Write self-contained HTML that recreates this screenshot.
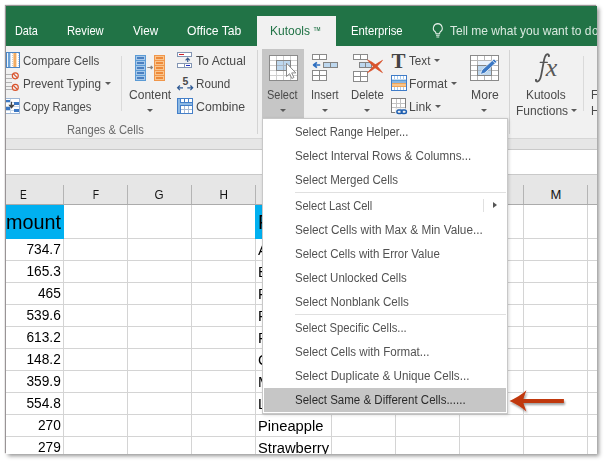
<!DOCTYPE html>
<html>
<head>
<meta charset="utf-8">
<title>Kutools Select menu</title>
<style>
html,body{margin:0;padding:0;background:#fff;}
body{width:605px;height:463px;overflow:hidden;position:relative;font-family:"Liberation Sans",sans-serif;}
#win{position:absolute;left:6px;top:6px;width:591px;height:448px;background:#fff;overflow:hidden;}
#shadow{position:absolute;left:6px;top:6px;width:591px;height:448px;box-shadow:2px 2px 4px 0 rgba(0,0,0,.42), -1px -1px 1px 0 rgba(30,20,25,.42);}
.abs{position:absolute;}
.t{position:absolute;white-space:nowrap;line-height:1;color:#444;transform-origin:0 50%;}
/* coordinates inside #win are page coords minus 6 -> use wrapper shifted */
#c{position:absolute;left:-6px;top:-6px;width:605px;height:463px;}
.tab{color:#fff;font-size:13.5px;}
.rib{font-size:13.5px;color:#444;}
.mi{font-size:12.5px;color:#444;left:295px;}
.vsep{position:absolute;width:1px;background:#dadada;}
.dd{position:absolute;width:0;height:0;border-left:3px solid transparent;border-right:3px solid transparent;border-top:3.2px solid #5a5a5a;}
.num{position:absolute;white-space:nowrap;line-height:1;color:#000;font-size:14px;text-align:right;right:544px;}
.fr{position:absolute;white-space:nowrap;line-height:1;color:#000;font-size:15px;left:259px;}
.hl{position:absolute;left:0;width:605px;height:1px;background:#d4d4d4;}
.vl{position:absolute;top:205px;height:260px;width:1px;background:#d4d4d4;}
.ch{position:absolute;top:188px;font-size:13px;color:#222;line-height:1;width:40px;text-align:center;}
.chs{position:absolute;top:185px;height:19px;width:1px;background:#b4b4b4;}
</style>
</head>
<body>
<div id="shadow"></div>
<div id="win"><div id="c">

<!-- ===== green tab bar ===== -->
<div class="abs" style="left:0;top:0;width:605px;height:46px;background:#217346;"></div>
<div class="abs" style="left:257px;top:16px;width:79px;height:31px;background:#f1f1f1;"></div>

<!-- ===== ribbon body ===== -->
<div class="abs" style="left:0;top:46px;width:605px;height:92px;background:#f1f1f1;"></div>
<div class="abs" style="left:0;top:138px;width:605px;height:1px;background:#d6d6d6;"></div>
<div class="abs" style="left:0;top:139px;width:605px;height:10px;background:#e6e6e6;"></div>
<div class="abs" style="left:0;top:149px;width:605px;height:1px;background:#c9c9c9;"></div>
<div class="abs" style="left:0;top:150px;width:605px;height:24px;background:#fff;"></div>
<div class="abs" style="left:0;top:174px;width:605px;height:1px;background:#c9c9c9;"></div>
<div class="abs" style="left:0;top:175px;width:605px;height:29px;background:#e6e6e6;"></div>
<div class="abs" style="left:0;top:204px;width:605px;height:1px;background:#ababab;"></div>

<!-- select button highlight -->
<div class="abs" style="left:262px;top:49px;width:42px;height:70px;background:#c6c6c6;"></div>

<!-- separators -->
<div class="vsep" style="left:121px;top:56px;height:55px;"></div>
<div class="vsep" style="left:257px;top:50px;height:84px;background:#d4d4d4;"></div>
<div class="vsep" style="left:509px;top:50px;height:84px;background:#d4d4d4;"></div>
<div class="vsep" style="left:583px;top:56px;height:55px;"></div>

<!-- ribbon texts -->
<span class="t" style="left:14.70px;top:23.80px;font-size:13px;color:#fff;transform:scaleX(0.8339);">Data</span>
<span class="t" style="left:67.30px;top:23.80px;font-size:13px;color:#fff;transform:scaleX(0.8610);">Review</span>
<span class="t" style="left:132.90px;top:23.80px;font-size:13px;color:#fff;transform:scaleX(0.8982);">View</span>
<span class="t" style="left:187.10px;top:23.80px;font-size:13px;color:#fff;transform:scaleX(0.9370);">Office Tab</span>
<span class="t" style="left:351.40px;top:23.80px;font-size:13px;color:#fff;transform:scaleX(0.8709);">Enterprise</span>
<span class="t" style="left:269.80px;top:23.80px;font-size:13px;color:#217346;transform:scaleX(0.9225);">Kutools</span>
<span class="t" style="left:313.20px;top:25.41px;font-size:10.5px;color:#217346;transform:scaleX(0.7810);">™</span>
<span class="t" style="left:450.20px;top:23.80px;font-size:13px;color:#d9e9df;transform:scaleX(0.9237);">Tell me what you want to d</span>
<span class="t" style="left:592.30px;top:23.80px;font-size:13px;color:#d9e9df;transform:scaleX(0.8900);">o</span>
<span class="t" style="left:23.40px;top:54.30px;font-size:13px;color:#4a4a4a;transform:scaleX(0.8886);">Compare Cells</span>
<span class="t" style="left:23.40px;top:77.30px;font-size:13px;color:#4a4a4a;transform:scaleX(0.9019);">Prevent Typing</span>
<span class="t" style="left:23.40px;top:100.30px;font-size:13px;color:#4a4a4a;transform:scaleX(0.8684);">Copy Ranges</span>
<span class="t" style="left:128.60px;top:87.70px;font-size:13px;color:#4a4a4a;transform:scaleX(0.9268);">Content</span>
<span class="t" style="left:196.00px;top:54.30px;font-size:13px;color:#4a4a4a;transform:scaleX(0.9421);">To Actual</span>
<span class="t" style="left:196.00px;top:77.30px;font-size:13px;color:#4a4a4a;transform:scaleX(0.8953);">Round</span>
<span class="t" style="left:196.00px;top:100.30px;font-size:13px;color:#4a4a4a;transform:scaleX(0.9457);">Combine</span>
<span class="t" style="left:267.40px;top:87.70px;font-size:13px;color:#4a4a4a;transform:scaleX(0.8441);">Select</span>
<span class="t" style="left:310.80px;top:87.70px;font-size:13px;color:#4a4a4a;transform:scaleX(0.8520);">Insert</span>
<span class="t" style="left:350.50px;top:87.70px;font-size:13px;color:#4a4a4a;transform:scaleX(0.8702);">Delete</span>
<span class="t" style="left:409.40px;top:54.30px;font-size:13px;color:#4a4a4a;transform:scaleX(0.8976);">Text</span>
<span class="t" style="left:409.40px;top:77.30px;font-size:13px;color:#4a4a4a;transform:scaleX(0.9302);">Format</span>
<span class="t" style="left:409.40px;top:100.30px;font-size:13px;color:#4a4a4a;transform:scaleX(0.9309);">Link</span>
<span class="t" style="left:470.50px;top:87.70px;font-size:13px;color:#4a4a4a;transform:scaleX(0.9386);">More</span>
<span class="t" style="left:526.30px;top:87.70px;font-size:13px;color:#4a4a4a;transform:scaleX(0.9155);">Kutools</span>
<span class="t" style="left:515.70px;top:103.50px;font-size:13px;color:#4a4a4a;transform:scaleX(0.9244);">Functions</span>
<span class="t" style="left:591.00px;top:87.70px;font-size:13px;color:#4a4a4a;transform:scaleX(0.8900);">F</span>
<span class="t" style="left:591.00px;top:103.50px;font-size:13px;color:#4a4a4a;transform:scaleX(0.8900);">H</span>
<span class="t" style="left:67.40px;top:124.14px;font-size:12px;color:#6a6a6a;transform:scaleX(0.9286);">Ranges &amp; Cells</span>

<!-- dropdown arrows -->
<div class="dd" style="left:104.6px;top:82.3px;"></div>
<div class="dd" style="left:146.800px;top:109px;"></div>
<div class="dd" style="left:279.600px;top:109px;"></div>
<div class="dd" style="left:321.500px;top:109px;"></div>
<div class="dd" style="left:363.700px;top:109px;"></div>
<div class="dd" style="left:434px;top:59.3px;"></div>
<div class="dd" style="left:451px;top:82.3px;"></div>
<div class="dd" style="left:435px;top:105.3px;"></div>
<div class="dd" style="left:480.800px;top:109px;"></div>
<div class="dd" style="left:570.8px;top:109.4px;"></div>

<svg class="abs" style="left:0;top:0;" width="605" height="140" viewBox="0 0 605 140">
<!-- lightbulb -->
<g fill="none" stroke="#e4efe8" stroke-width="1.1">
<path d="M437.8 23.6a4.5 4.5 0 0 0-2.5 8.2c.5.6.7 1.2.7 2h3.6c0-.8.2-1.400.7-2a4.5 4.500 0 0 0-2.500-8.200z"/>
<path d="M436 35.300h3.600M436.400 37h2.800"/>
</g>
<!-- Compare Cells -->
<g shape-rendering="crispEdges">
<rect x="6.500" y="52.500" width="13" height="15" fill="#fff" stroke="#4a86c6"/>
<path d="M12.500 53v14M18.500 53v14" stroke="#d0d0d0" stroke-dasharray="1 1" fill="none"/>
</g>
<rect x="7.900" y="53" width="2.500" height="14" fill="#6ea3d8"/>
<rect x="13.400" y="53" width="3" height="14" fill="#f2ac62"/>
<!-- Prevent Typing -->
<g shape-rendering="crispEdges" stroke="#b2b2b2" fill="none">
<path d="M0 74.500h12M0 78.500h12M0 82.500h12M0 86.500h12M0 89.500h12"/>
</g>
<g fill="#f1f1f1" stroke="#d9532c" stroke-width="1.150">
<circle cx="15.300" cy="75.800" r="3"/><path d="M13.200 73.700l4.200 4.200"/>
<circle cx="15.300" cy="87.400" r="3"/><path d="M13.200 85.300l4.200 4.200"/>
</g>
<!-- Copy Ranges -->
<g shape-rendering="crispEdges">
<rect x="2.500" y="98.500" width="17" height="15" fill="#fff" stroke="#9bb4d4"/>
<path d="M3 102.500h16M3 106.500h16M3 110.500h16M10.500 99v14" stroke="#c9d9ea" fill="none"/>
<rect x="5" y="100" width="5" height="2" fill="#3b78c4"/>
<rect x="14" y="102" width="5" height="3" fill="#3b78c4"/>
<rect x="5" y="107" width="5" height="3" fill="#3b78c4"/>
<rect x="14" y="109" width="5" height="3" fill="#3b78c4"/>
</g>
<path d="M11.500 101.800v4M9.400 105.200l2.100 2.600 2.100-2.600z" stroke="#444" stroke-width="1.100" fill="#444"/>
<!-- Content -->
<g shape-rendering="crispEdges">
<rect x="135" y="55" width="11" height="26" fill="#5b9bd5"/>
<g fill="#4a7fc0" stroke="#a6c8ea">
<rect x="136.500" y="56.500" width="8" height="3"/><rect x="136.500" y="61.500" width="8" height="3"/><rect x="136.500" y="66.500" width="8" height="3"/><rect x="136.500" y="71.500" width="8" height="3"/><rect x="136.500" y="76.500" width="8" height="3"/>
</g>
<rect x="154" y="55" width="11" height="26" fill="#f0964a"/>
<g fill="#ee8a3a" stroke="#f9c58d">
<rect x="155.500" y="56.500" width="8" height="3"/><rect x="155.500" y="61.500" width="8" height="3"/><rect x="155.500" y="66.500" width="8" height="3"/><rect x="155.500" y="71.500" width="8" height="3"/><rect x="155.500" y="76.500" width="8" height="3"/>
</g>
</g>
<path d="M147.300 67.500h4.500M151 65.900l1.900 1.600-1.900 1.600z" stroke="#808080" fill="#808080" stroke-width="0.900"/>
<!-- To Actual -->
<g shape-rendering="crispEdges">
<rect x="177.500" y="52.500" width="14" height="4" fill="#fff" stroke="#8395b3"/>
<rect x="179" y="54" width="5" height="1" fill="#d0202a"/>
<rect x="177.500" y="63.500" width="14" height="4" fill="#fff" stroke="#8395b3"/>
<path d="M184.500 64v4" stroke="#8395b3"/>
<rect x="186" y="65" width="4" height="1" fill="#2030c0"/>
</g>
<path d="M187.700 62.100v-3.500M185.600 60.400l2.100-2.300 2.100 2.300" stroke="#3a5a8c" fill="none" stroke-width="1.200"/>
<!-- Round -->
<g stroke="#2f5a94" fill="none" stroke-width="1.200">
<path d="M183 87.800h-5.200M179.900 85.500l-2.300 2.300 2.300 2.300"/>
<path d="M187.300 87.800h5.200M190.400 85.500l2.300 2.300-2.300 2.300"/>
</g>
<!-- Combine -->
<g shape-rendering="crispEdges">
<rect x="177" y="98" width="16" height="16" fill="#447fc8"/>
<rect x="178" y="99" width="2" height="14" fill="#8db9e4"/>
<rect x="178" y="103" width="14" height="2" fill="#8db9e4"/>
<rect x="181" y="106" width="11" height="7" fill="#a9bcd6"/>
<g fill="#fff">
<rect x="181" y="99" width="3" height="3"/><rect x="185" y="99" width="3" height="3"/><rect x="189" y="99" width="3" height="3"/>
<rect x="181" y="106" width="3" height="3"/><rect x="185" y="106" width="3" height="3"/><rect x="189" y="106" width="3" height="3"/>
<rect x="181" y="110" width="3" height="3"/><rect x="185" y="110" width="3" height="3"/><rect x="189" y="110" width="3" height="3"/>
</g>
</g>
</svg>

<span class="abs" style="left:182.4px;top:76.1px;font-family:'Liberation Sans',sans-serif;font-weight:bold;font-size:10.5px;line-height:1;color:#4a4a4a;">5</span>
<svg class="abs" style="left:0;top:0;" width="605" height="140" viewBox="0 0 605 140">
<!-- Select -->
<g shape-rendering="crispEdges">
<rect x="269.500" y="55.500" width="28" height="25" fill="#fff" stroke="#8a8a8a"/>
<path d="M276.500 56v24M283.500 56v24M290.500 56v24M270 60.500h27M270 65.500h27M270 70.500h27M270 75.500h27" stroke="#cfcfcf" fill="none"/>
<rect x="276.500" y="60.500" width="14" height="10" fill="#bdd7ee" stroke="#858585"/>
<path d="M283.500 61v9M277 65.500h13" stroke="#aab4c0" fill="none"/>
</g>
<path d="M286.500 63.200v13.300l3.100-2.800 2.200 4.800 2.100-1-2.200-4.600h4.100z" fill="#fff" stroke="#8a8a8a" stroke-width="1" stroke-linejoin="round"/>
<!-- Insert -->
<g shape-rendering="crispEdges" fill="#fff" stroke="#8a8a8a">
<rect x="312.500" y="54.500" width="14" height="5"/><path d="M319.500 55v5"/>
<rect x="312.500" y="70.500" width="14" height="10"/><path d="M319.500 71v10M313 75.500h14"/>
</g>
<g shape-rendering="crispEdges" fill="#bdd7ee" stroke="#838383">
<rect x="323.500" y="62.500" width="14" height="5"/><path d="M330.500 63v5"/>
</g>
<path d="M314.600 65h5.600M316.900 62.300l-3.300 2.700 3.300 2.700" stroke="#2e6fc0" fill="none" stroke-width="1.700" stroke-linejoin="round"/>
<!-- Delete -->
<g shape-rendering="crispEdges" fill="#fff" stroke="#8a8a8a">
<rect x="353.500" y="54.500" width="14" height="5"/><path d="M360.500 55v5"/>
<rect x="353.500" y="71.500" width="14" height="10"/><path d="M360.500 72v10M354 76.500h14"/>
</g>
<g shape-rendering="crispEdges" fill="#bdd7ee" stroke="#838383">
<rect x="359.500" y="62.500" width="12" height="5"/><path d="M365.500 63v5"/>
</g>
<path d="M367.400 59.800Q376.500 63.500 382.500 72.700Q373.200 68 367.400 59.800Z" fill="#d9532c" stroke="#d9532c" stroke-width="0.600" stroke-linejoin="round"/><path d="M382.600 60.200Q373.200 64.600 367.400 72.800Q377.400 67.600 382.600 60.200Z" fill="#d9532c" stroke="#d9532c" stroke-width="0.600" stroke-linejoin="round"/>
<!-- Text T -->
<!-- Format -->
<g shape-rendering="crispEdges">
<rect x="391.500" y="75.500" width="15" height="15" fill="#fff" stroke="#3f7cc8"/>
<path d="M394.500 76v3M397.500 76v3M400.500 76v3M403.500 76v3M394.500 87v3M397.500 87v3M400.500 87v3M403.500 87v3" stroke="#a9cbec" fill="none"/>
<rect x="392" y="79" width="14" height="1" fill="#c4dbf1"/>
<rect x="392" y="80" width="14" height="1" fill="#5b9bd5"/>
<rect x="392" y="81" width="14" height="2" fill="#85b4e2"/>
<rect x="392" y="83" width="14" height="1" fill="#f0a558"/>
<rect x="392" y="84" width="14" height="2" fill="#f7c48a"/>
<rect x="392" y="86" width="14" height="1" fill="#f0a558"/>
</g>
<!-- Link -->
<g shape-rendering="crispEdges">
<rect x="391.500" y="98.500" width="14" height="14" fill="#fff" stroke="#7f7f7f"/>
<path d="M396.500 99v13M400.500 99v13M392 103.500h13M392 107.500h13" stroke="#c2c2c2" fill="none"/>
</g>
<rect x="395.200" y="108.300" width="12.500" height="6.500" fill="#f1f1f1"/>
<g fill="none" stroke="#1f5fb0" stroke-width="1.500">
<rect x="396.900" y="110" width="5.200" height="3.500" rx="1.750"/>
<rect x="401.200" y="110" width="5.200" height="3.500" rx="1.750"/>
</g>
<!-- More -->
<g shape-rendering="crispEdges">
<rect x="470.500" y="55.500" width="28" height="25" fill="#fff" stroke="#8a8a8a"/>
<path d="M477.500 56v24M484.500 56v24M491.500 56v24M471 60.500h27M471 65.500h27M471 70.500h27M471 75.500h27" stroke="#b6b6b6" fill="none"/>
<rect x="478" y="61" width="13" height="4" fill="#eaf2fb"/>
<rect x="477.500" y="65.500" width="14" height="10" fill="#bdd7ee" stroke="#858585"/>
<path d="M478 70.500h13" stroke="#a9b7c8" fill="none"/>
</g>
<path d="M494 58.900l2.900 2.900-12.100 11.200-4.500 1.500 1.600-4.400z" fill="#3b78c4" stroke="#fff" stroke-width="0.700" stroke-linejoin="round"/>
<path d="M492.300 60.500l3 3" stroke="#fff" stroke-width="0.800"/>
<!-- fx -->
<!-- fx : f -->
<g fill="none" stroke="#555" stroke-linecap="round">
<path d="M548.9 55.9C549.1 54.7 548 54 546.9 54.3C545.1 54.9 544.4 57.6 543.6 62.3L541.3 74.600C540.6 78.2 539.700 80.9 537.700 81.400C536.600 81.700 535.700 81.100 535.900 80.100" stroke-width="1.800"/>
<path d="M540.200 62.400h7.200" stroke-width="1.100"/>
</g>
<circle cx="548.8" cy="55.900" r="1" fill="#555"/><circle cx="536" cy="80.100" r="1" fill="#555"/>
</svg>

<span class="abs" style="left:391.5px;top:51.1px;font-family:'Liberation Serif',serif;font-weight:bold;font-size:21px;line-height:1;color:#444;">T</span>
<span class="abs" style="left:545.8px;top:55.1px;font-family:'Liberation Serif',serif;font-style:italic;font-size:26px;line-height:1;color:#585858;">x</span>


<!-- ===== sheet ===== -->
<div class="abs" style="left:0;top:205px;width:605px;height:260px;background:#fff;"></div>
<!-- grid -->
<div class="hl" style="top:238px;"></div>
<div class="hl" style="top:260px;"></div>
<div class="hl" style="top:282px;"></div>
<div class="hl" style="top:304px;"></div>
<div class="hl" style="top:326px;"></div>
<div class="hl" style="top:348px;"></div>
<div class="hl" style="top:370px;"></div>
<div class="hl" style="top:392px;"></div>
<div class="hl" style="top:414px;"></div>
<div class="hl" style="top:436px;"></div>
<div class="vl" style="left:63px;"></div>
<div class="vl" style="left:127px;"></div>
<div class="vl" style="left:191px;"></div>
<div class="vl" style="left:255px;"></div>
<div class="vl" style="left:331px;"></div>
<div class="vl" style="left:395px;"></div>
<div class="vl" style="left:459px;"></div>
<div class="vl" style="left:523px;"></div>
<div class="vl" style="left:587px;"></div>
<div class="abs" style="left:0;top:205px;width:64px;height:34px;background:#00b0f0;"></div>
<div class="abs" style="left:255px;top:205px;width:77px;height:34px;background:#00b0f0;"></div>
<div class="chs" style="left:63px;"></div>
<div class="chs" style="left:127px;"></div>
<div class="chs" style="left:191px;"></div>
<div class="chs" style="left:255px;"></div>
<div class="chs" style="left:331px;"></div>
<div class="chs" style="left:395px;"></div>
<div class="chs" style="left:459px;"></div>
<div class="chs" style="left:523px;"></div>
<div class="chs" style="left:587px;"></div>
<span class="t" style="left:19.16px;top:188.30px;font-size:13px;color:#141414;transform-origin:50% 50%;transform:scaleX(0.7800);">E</span>
<span class="t" style="left:91.53px;top:188.30px;font-size:13px;color:#141414;transform-origin:50% 50%;transform:scaleX(0.8000);">F</span>
<span class="t" style="left:154.44px;top:188.30px;font-size:13px;color:#141414;transform-origin:50% 50%;transform:scaleX(0.9000);">G</span>
<span class="t" style="left:218.91px;top:188.30px;font-size:13px;color:#141414;transform-origin:50% 50%;transform:scaleX(0.9000);">H</span>
<span class="t" style="left:291.69px;top:188.30px;font-size:13px;color:#141414;transform-origin:50% 50%;transform:scaleX(0.9000);">I</span>
<span class="t" style="left:360.25px;top:188.30px;font-size:13px;color:#141414;transform-origin:50% 50%;transform:scaleX(0.9000);">J</span>
<span class="t" style="left:423.16px;top:188.30px;font-size:13px;color:#141414;transform-origin:50% 50%;transform:scaleX(0.9000);">K</span>
<span class="t" style="left:487.88px;top:188.30px;font-size:13px;color:#141414;transform-origin:50% 50%;transform:scaleX(0.9000);">L</span>
<span class="t" style="left:550.59px;top:188.30px;font-size:13px;color:#141414;transform-origin:50% 50%;transform:scaleX(1.0000);">M</span>
<span class="t" style="left:4.32px;top:212.05px;font-size:20.5px;color:#000;transform-origin:100% 50%;transform:scaleX(0.9650);">mount</span>
<span class="t" style="left:21.71px;top:241.38px;font-size:15.5px;color:#000;transform-origin:100% 50%;transform:scaleX(0.8840);">734.7</span>
<span class="t" style="left:258.30px;top:241.78px;font-size:15.5px;color:#000;transform:scaleX(0.9490);">Apple</span>
<span class="t" style="left:21.71px;top:263.38px;font-size:15.5px;color:#000;transform-origin:100% 50%;transform:scaleX(0.8840);">165.3</span>
<span class="t" style="left:258.30px;top:263.78px;font-size:15.5px;color:#000;transform:scaleX(0.9490);">Banana</span>
<span class="t" style="left:34.64px;top:285.38px;font-size:15.5px;color:#000;transform-origin:100% 50%;transform:scaleX(0.8840);">465</span>
<span class="t" style="left:258.30px;top:285.78px;font-size:15.5px;color:#000;transform:scaleX(0.9490);">Peach</span>
<span class="t" style="left:21.71px;top:307.38px;font-size:15.5px;color:#000;transform-origin:100% 50%;transform:scaleX(0.8840);">539.6</span>
<span class="t" style="left:258.30px;top:307.78px;font-size:15.5px;color:#000;transform:scaleX(0.9490);">Pear</span>
<span class="t" style="left:21.71px;top:329.38px;font-size:15.5px;color:#000;transform-origin:100% 50%;transform:scaleX(0.8840);">613.2</span>
<span class="t" style="left:258.30px;top:329.78px;font-size:15.5px;color:#000;transform:scaleX(0.9490);">Plum</span>
<span class="t" style="left:21.71px;top:351.38px;font-size:15.5px;color:#000;transform-origin:100% 50%;transform:scaleX(0.8840);">148.2</span>
<span class="t" style="left:258.30px;top:351.78px;font-size:15.5px;color:#000;transform:scaleX(0.9490);">Cherry</span>
<span class="t" style="left:21.71px;top:373.38px;font-size:15.5px;color:#000;transform-origin:100% 50%;transform:scaleX(0.8840);">359.9</span>
<span class="t" style="left:258.30px;top:373.78px;font-size:15.5px;color:#000;transform:scaleX(0.9490);">Mango</span>
<span class="t" style="left:21.71px;top:395.38px;font-size:15.5px;color:#000;transform-origin:100% 50%;transform:scaleX(0.8840);">554.8</span>
<span class="t" style="left:258.30px;top:395.78px;font-size:15.5px;color:#000;transform:scaleX(0.9490);">Lemon</span>
<span class="t" style="left:34.64px;top:417.38px;font-size:15.5px;color:#000;transform-origin:100% 50%;transform:scaleX(0.8840);">270</span>
<span class="t" style="left:258.30px;top:417.78px;font-size:15.5px;color:#000;transform:scaleX(0.9490);">Pineapple</span>
<span class="t" style="left:34.64px;top:439.38px;font-size:15.5px;color:#000;transform-origin:100% 50%;transform:scaleX(0.8840);">279</span>
<span class="t" style="left:258.30px;top:439.78px;font-size:15.5px;color:#000;transform:scaleX(0.9490);">Strawberry</span>
<span class="t" style="left:258.30px;top:212.05px;font-size:20.5px;color:#000;transform:scaleX(0.9650);">Fruit</span>



<!-- ===== dropdown menu ===== -->
<div class="abs" id="menu" style="left:262px;top:118px;width:244px;height:294px;background:#fff;border:1px solid #c8c8c8;box-sizing:content-box;box-shadow:1px 1px 3px rgba(0,0,0,.16);"></div>
<div class="abs" style="left:264px;top:388px;width:242px;height:24px;background:#c6c6c6;"></div>
<div class="abs" style="left:295px;top:192px;width:211px;height:1px;background:#e0e0e0;"></div>
<div class="abs" style="left:295px;top:314px;width:211px;height:1px;background:#e0e0e0;"></div>
<div class="abs" style="left:483px;top:199px;width:1px;height:13px;background:#e0e0e0;"></div>
<div class="abs" style="left:493px;top:202px;width:0;height:0;border-top:3.5px solid transparent;border-bottom:3.5px solid transparent;border-left:4.2px solid #555;"></div>
<span class="t" style="left:295.00px;top:125.94px;font-size:12px;color:#525252;transform:scaleX(0.9444);">Select Range Helper...</span>
<span class="t" style="left:295.00px;top:149.94px;font-size:12px;color:#525252;transform:scaleX(0.9713);">Select Interval Rows &amp; Columns...</span>
<span class="t" style="left:295.00px;top:173.94px;font-size:12px;color:#525252;transform:scaleX(0.9601);">Select Merged Cells</span>
<span class="t" style="left:295.00px;top:199.94px;font-size:12px;color:#525252;transform:scaleX(0.9271);">Select Last Cell</span>
<span class="t" style="left:295.00px;top:223.94px;font-size:12px;color:#525252;transform:scaleX(0.9823);">Select Cells with Max &amp; Min Value...</span>
<span class="t" style="left:295.00px;top:247.94px;font-size:12px;color:#525252;transform:scaleX(0.9579);">Select Cells with Error Value</span>
<span class="t" style="left:295.00px;top:271.94px;font-size:12px;color:#525252;transform:scaleX(0.9570);">Select Unlocked Cells</span>
<span class="t" style="left:295.00px;top:295.94px;font-size:12px;color:#525252;transform:scaleX(0.9694);">Select Nonblank Cells</span>
<span class="t" style="left:295.00px;top:321.94px;font-size:12px;color:#525252;transform:scaleX(0.9409);">Select Specific Cells...</span>
<span class="t" style="left:295.00px;top:345.94px;font-size:12px;color:#525252;transform:scaleX(0.9650);">Select Cells with Format...</span>
<span class="t" style="left:295.00px;top:369.94px;font-size:12px;color:#525252;transform:scaleX(0.9720);">Select Duplicate &amp; Unique Cells...</span>
<span class="t" style="left:295.00px;top:393.94px;font-size:12px;color:#2b2b2b;transform:scaleX(0.9592);">Select Same &amp; Different Cells......</span>

<!-- red arrow -->
<svg class="abs" style="left:0;top:380px;" width="605" height="50" viewBox="0 380 605 50"><defs><filter id="ash" x="-10%" y="-30%" width="130%" height="180%"><feGaussianBlur in="SourceAlpha" stdDeviation="1.2"/><feOffset dx="1.300" dy="1.800"/><feComponentTransfer><feFuncA type="linear" slope="0.380"/></feComponentTransfer><feMerge><feMergeNode/><feMergeNode in="SourceGraphic"/></feMerge></filter></defs><path filter="url(#ash)" d="M509.500 400.900Q519.500 396.600 526.400 390.300L523.300 399.100L563.900 399.100L563.900 402.900L523.300 402.900L526.400 411.500Q519.500 405.200 509.500 400.900Z" fill="#c0380c"/></svg>

</div></div>
</body>
</html>
